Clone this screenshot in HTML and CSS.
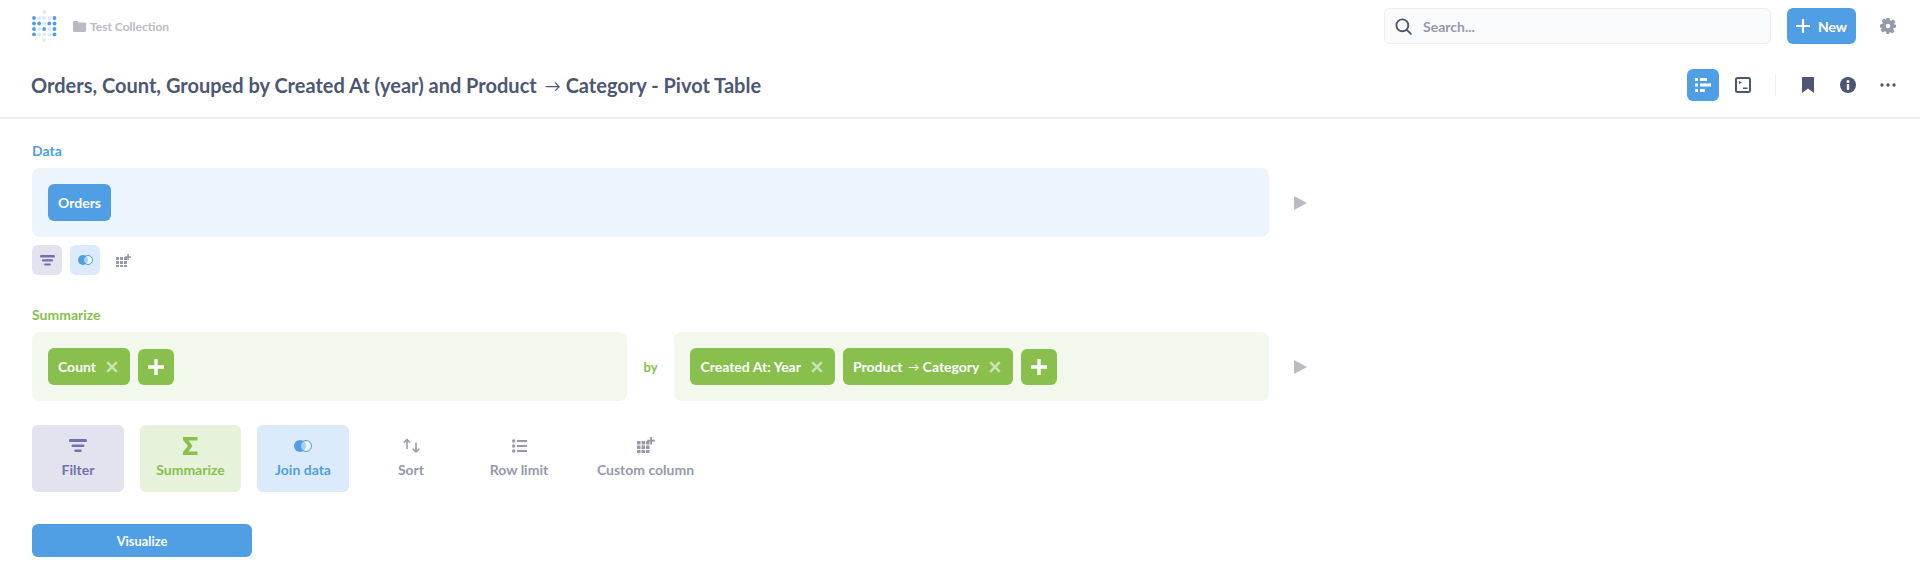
FILE: index.html
```html
<!DOCTYPE html>
<html lang="en">
<head>
<meta charset="utf-8">
<title>Orders, Count - Pivot Table</title>
<link rel="stylesheet" href="styles.css">
</head>
<body>
<header class="header">
  <div class="topbar">
    <div class="brand">
      <svg class="logo" viewBox="0 0 26 32" width="26" height="32">
        <g fill="#509ee3">
          <circle cx="2" cy="8" r="1.9"/><circle cx="22.5" cy="8" r="1.9"/>
          <circle cx="2" cy="13.5" r="1.9"/><circle cx="7.2" cy="13.5" r="1.9"/><circle cx="17.3" cy="13.5" r="1.9"/><circle cx="22.5" cy="13.5" r="1.9"/>
          <circle cx="2" cy="19" r="1.9"/><circle cx="12.2" cy="19" r="1.9"/><circle cx="22.5" cy="19" r="1.9"/>
          <circle cx="2" cy="24.4" r="1.9"/><circle cx="22.5" cy="24.4" r="1.9"/>
        </g>
        <g fill="#dcebf9">
          <circle cx="12.2" cy="2" r="1.9"/>
          <circle cx="7.2" cy="8" r="1.9"/><circle cx="12.2" cy="8" r="1.9"/><circle cx="17.3" cy="8" r="1.9"/>
          <circle cx="12.2" cy="13.5" r="1.9"/>
          <circle cx="7.2" cy="19" r="1.9"/><circle cx="17.3" cy="19" r="1.9"/>
          <circle cx="7.2" cy="24.4" r="1.9"/><circle cx="12.2" cy="24.4" r="1.9"/><circle cx="17.3" cy="24.4" r="1.9"/>
          <circle cx="12.2" cy="30" r="1.9"/>
        </g>
      </svg>
      <a class="crumb">
        <svg viewBox="0 0 13 11" width="13" height="11"><path fill="#b8bbc3" d="M0 1.2C0 .5.5 0 1.2 0h3.2l1.4 1.6h6C12.500 1.600 13 2.100 13 2.800v7C13 10.500 12.500 11 11.800 11H1.200C.5 11 0 10.500 0 9.800z"/></svg>
        <span>Test Collection</span>
      </a>
    </div>
    <div class="top-actions">
      <div class="search">
        <svg viewBox="0 0 18 18" width="17" height="17"><circle cx="7.800" cy="7.800" r="6.300" fill="none" stroke="#4c5773" stroke-width="2"/><path d="M12.500 12.500L16.800 16.800" stroke="#4c5773" stroke-width="2" stroke-linecap="round"/></svg>
        <span>Search...</span>
      </div>
      <button class="new-btn">
        <svg viewBox="0 0 14 14" width="14" height="14"><path d="M7 0v14M0 7h14" stroke="#fff" stroke-width="2.200"/></svg>
        <span>New</span>
      </button>
      <svg class="gear" viewBox="0 0 32 32" width="16" height="16"><path fill="#949aab" fill-rule="evenodd" d="M13 0h6l1 4.600 2.600 1.100 4-2.500 4.200 4.200-2.500 4 1.100 2.600L32 13v6l-4.600 1-1.100 2.600 2.500 4-4.200 4.200-4-2.500-2.600 1.100L19 32h-6l-1-4.600-2.600-1.100-4 2.500-4.200-4.200 2.500-4L4.600 20 0 19v-6l4.600-1 1.100-2.600-2.500-4 4.200-4.200 4 2.500L12 4.600zM16 11.500a4.500 4.500 0 1 0 0 9 4.500 4.500 0 0 0 0-9z"/></svg>
    </div>
  </div>
  <div class="titlebar">
    <h1>Orders, Count, Grouped by Created At (year) and Product <span class="arrow">→</span> Category - Pivot Table</h1>
    <div class="title-actions">
      <button class="icon-btn active">
        <svg viewBox="0 0 16 14" width="16" height="14"><path fill="#fff" d="M0 0h3v3H0zM5 0h7v3H5zM0 5.500h3v3H0zM5 5.500h11v3H5zM0 11h3v3H0zM5 11h5v3H5z"/></svg>
      </button>
      <button class="icon-btn">
        <svg viewBox="0 0 16 16" width="16" height="16"><rect x="1" y="1" width="14" height="14" rx="1.500" fill="none" stroke="#4c5773" stroke-width="2"/><path fill="#4c5773" d="M4 4l3 1.500L4 7zM8 10.500h4.500V12H8z"/></svg>
      </button>
      <span class="divider"></span>
      <svg class="t-icon bookmark" viewBox="0 0 12 16" width="12" height="16"><path fill="#4c5773" d="M0 0h12v16L6 11.500 0 16z"/></svg>
      <svg class="t-icon info" viewBox="0 0 16 16" width="16" height="16"><circle cx="8" cy="8" r="8" fill="#4c5773"/><rect x="6.800" y="7" width="2.400" height="5.800" fill="#fff"/><circle cx="8" cy="4.600" r="1.500" fill="#fff"/></svg>
      <svg class="t-icon more" viewBox="0 0 16 4" width="16" height="4"><g fill="#4c5773"><circle cx="2" cy="2" r="1.700"/><circle cx="8" cy="2" r="1.700"/><circle cx="14" cy="2" r="1.700"/></g></svg>
    </div>
  </div>
</header>

<main class="notebook">
  <section class="step data-step">
    <div class="step-label blue">Data</div>
    <div class="step-row">
      <div class="panel blue-panel grow">
        <span class="chip blue-chip">Orders</span>
      </div>
      <svg class="play" viewBox="0 0 13 14" width="13" height="14"><path fill="#b8bbc3" d="M0 0l13 7-13 7z"/></svg>
    </div>
    <div class="mini-actions">
      <button class="mini purple-bg">
        <svg viewBox="0 0 15 11" width="15" height="11"><path fill="#7172ad" d="M1 0h13a1 1 0 0 1 0 2.400H1A1 1 0 0 1 1 0zM3 4.300h9a1 1 0 0 1 0 2.200H3a1 1 0 0 1 0-2.200zM5.200 8.400h4.600a1 1 0 0 1 0 2.200H5.200a1 1 0 0 1 0-2.200z"/></svg>
      </button>
      <button class="mini blue-bg">
        <svg viewBox="0 0 15 10" width="15" height="10"><circle cx="5" cy="5" r="5" fill="#509ee3"/><circle cx="10" cy="5" r="4.500" fill="#fff" fill-opacity=".5" stroke="#509ee3"/></svg>
      </button>
      <button class="mini plain">
        <svg viewBox="0 0 15 13" width="15" height="13"><g fill="#949aab"><path d="M0 3h3v3H0zM4 3h3v3H4zM8 3h3v3H8zM0 7h3v3H0zM4 7h3v3H4zM8 7h3v3H8zM0 11h3v2H0zM4 11h3v2H4zM8 11h3v2H8z"/><path d="M11.300 0h1.500v2.200H15v1.500h-2.200v2.200h-1.500V3.700H9V2.200h2.300z"/></g></svg>
      </button>
    </div>
  </section>

  <section class="step summarize-step">
    <div class="step-label green">Summarize</div>
    <div class="step-row">
      <div class="panel green-panel half">
        <span class="chip green-chip"><span>Count</span><svg class="x" viewBox="0 0 12 12" width="12" height="12"><path d="M1.200 1.200l9.600 9.600M10.800 1.200l-9.600 9.600" stroke="#fff" stroke-opacity=".55" stroke-width="2.600"/></svg></span>
        <button class="plus-chip"><svg viewBox="0 0 16 16" width="16" height="16"><path d="M8 0v16M0 8h16" stroke="#fff" stroke-width="3.400"/></svg></button>
      </div>
      <span class="by">by</span>
      <div class="panel green-panel breakout">
        <span class="chip green-chip"><span>Created At: Year</span><svg class="x" viewBox="0 0 12 12" width="12" height="12"><path d="M1.200 1.200l9.600 9.600M10.800 1.200l-9.600 9.600" stroke="#fff" stroke-opacity=".55" stroke-width="2.600"/></svg></span>
        <span class="chip green-chip"><span>Product <span class="arrow">→</span> Category</span><svg class="x" viewBox="0 0 12 12" width="12" height="12"><path d="M1.200 1.200l9.600 9.600M10.800 1.200l-9.600 9.600" stroke="#fff" stroke-opacity=".55" stroke-width="2.600"/></svg></span>
        <button class="plus-chip"><svg viewBox="0 0 16 16" width="16" height="16"><path d="M8 0v16M0 8h16" stroke="#fff" stroke-width="3.400"/></svg></button>
      </div>
      <svg class="play" viewBox="0 0 13 14" width="13" height="14"><path fill="#b8bbc3" d="M0 0l13 7-13 7z"/></svg>
    </div>
  </section>

  <div class="actions">
    <button class="action purple">
      <svg viewBox="0 0 18 18" width="18" height="18"><path fill="#7172ad" d="M1.200 2h15.600a1.400 1.400 0 0 1 0 3H1.200a1.400 1.400 0 0 1 0-3zM3.800 7.500h10.400a1.300 1.300 0 0 1 0 2.600H3.800a1.300 1.300 0 0 1 0-2.600zM6.500 12.500h5a1.200 1.200 0 0 1 0 2.400h-5a1.200 1.200 0 0 1 0-2.400z"/></svg>
      <span>Filter</span>
    </button>
    <button class="action lime">
      <svg viewBox="0 0 15 18" width="15" height="18"><path fill="#88bf4d" d="M0 0h14.500v3.400H5.500l4 5.600-4 5.600h9V18H0v-3l5-6-5-6z"/></svg>
      <span>Summarize</span>
    </button>
    <button class="action sky">
      <svg viewBox="0 0 18 18" width="18" height="18"><circle cx="6" cy="9" r="6" fill="#509ee3"/><circle cx="12" cy="9" r="5.500" fill="#fff" fill-opacity=".5" stroke="#509ee3"/></svg>
      <span>Join data</span>
    </button>
    <button class="action grey">
      <svg viewBox="0 0 17 18" width="17" height="18"><path d="M4 12V2.500M.7 5.800L4 2.500l3.300 3.300M13 5.500V15M9.700 11.700L13 15l3.300-3.300" fill="none" stroke="#949aab" stroke-width="1.500"/></svg>
      <span>Sort</span>
    </button>
    <button class="action grey">
      <svg viewBox="0 0 15 18" width="15" height="18"><g fill="#949aab"><circle cx="1.700" cy="4" r="1.700"/><circle cx="1.700" cy="9" r="1.700"/><circle cx="1.700" cy="14" r="1.700"/><path d="M5 3h10v2H5zM5 8h10v2H5zM5 13h10v2H5z"/></g></svg>
      <span>Row limit</span>
    </button>
    <button class="action grey">
      <svg viewBox="0 0 18 16" width="18" height="16"><g fill="#949aab"><path d="M0 4h3.500v3.500H0zM4.500 4H8v3.500H4.500zM9 4h3.500v3.500H9zM0 8.500h3.500V12H0zM4.500 8.500H8V12H4.500zM9 8.500h3.500V12H9zM0 13h3.500v3H0zM4.500 13H8v3H4.500zM9 13h3.500v3H9z"/><path d="M13.200 0h1.800v2.800H18v1.800h-3v2.800h-1.800V4.600h-2.900V2.800h2.900z"/></g></svg>
      <span>Custom column</span>
    </button>
  </div>

  <button class="visualize">Visualize</button>
</main>
</body>
</html>
```

FILE: styles.css
```css
* { box-sizing: border-box; }
html, body { margin: 0; padding: 0; background: #fff; }
body {
  font-family: Lato, "Noto Sans", sans-serif;
  font-weight: 700;
  color: #4c5773;
  height: 566px;
  overflow: hidden;
}
button { font: inherit; border: 0; padding: 0; background: none; }
svg { display: block; flex: none; }
.arrow { font-size: .8em; font-weight: 400; margin-left: .2em; vertical-align: .08em; }

.header { height: 119px; border-bottom: 2px solid #f0f0f0; }
.topbar {
  height: 52px;
  display: flex;
  justify-content: space-between;
  padding: 8px 24px 0 32px;
}
.brand { display: flex; align-items: flex-start; }
.logo { margin-top: 2px; }
.crumb {
  display: flex;
  align-items: center;
  gap: 4px;
  margin: 7px 0 0 15px;
  font-size: 12px;
  height: 22px;
  color: #b8bbc3;
}
.top-actions { display: flex; align-items: flex-start; }
.search {
  width: 387px;
  height: 36px;
  display: flex;
  align-items: center;
  gap: 11px;
  padding-left: 10px;
  background: #f9fbfc;
  border: 1px solid #eeecec;
  border-radius: 6px;
  font-size: 14px;
  color: #949aab;
}
.new-btn {
  width: 69px;
  height: 36px;
  margin-left: 16px;
  display: flex;
  align-items: center;
  justify-content: center;
  gap: 8px;
  background: #509ee3;
  border-radius: 6px;
  color: #fff;
  font-size: 14px;
}
.gear { margin: 10px 0 0 24px; }

.titlebar {
  height: 65px;
  display: flex;
  justify-content: space-between;
  padding: 17px 24px 0 31px;
}
h1 { margin: 0; font-size: 20px; font-weight: 700; line-height: 32px; color: #4c5773; }
.title-actions { display: flex; align-items: center; height: 32px; }
.icon-btn {
  width: 32px;
  height: 32px;
  margin-right: 8px;
  display: flex;
  align-items: center;
  justify-content: center;
  border-radius: 6px;
}
.icon-btn.active { background: #509ee3; }
.divider { width: 1px; height: 22px; background: #f0f0f0; margin: 0 26px 0 8px; }
.t-icon.info { margin: 0 24px 0 26px; }

.notebook { padding-left: 32px; }
.step-label { font-size: 14px; line-height: 16px; }
.blue { color: #509ee3; }
.green { color: #88bf4d; }
.step-row { display: flex; align-items: center; margin-top: 9px; width: 1275px; }
.panel {
  height: 69px;
  display: flex;
  align-items: center;
  gap: 8px;
  padding: 0 16px;
  border-radius: 8px;
}
.grow { width: 1238px; }
.half { width: 595px; }
.breakout { width: 595px; }
.blue-panel { background: #ecf4fc; }
.green-panel { background: #f3f8ed; }
.play { margin-left: 25px; }
.by { width: 48px; text-align: center; font-size: 13px; color: #88bf4d; }

.data-step { padding-top: 24px; }
.summarize-step { margin-top: 32px; }
.chip {
  height: 37px;
  display: inline-flex;
  align-items: center;
  gap: 10px;
  padding: 0 10px;
  border-radius: 6px;
  color: #fff;
  font-size: 14px;
}
.blue-chip { background: #509ee3; }
.green-chip { background: #88bf4d; padding-right: 12px; }
.plus-chip {
  width: 36px;
  height: 36px;
  display: flex;
  align-items: center;
  justify-content: center;
  background: #88bf4d;
  border-radius: 6px;
}

.mini-actions { display: flex; gap: 8px; margin-top: 8px; }
.mini {
  width: 30px;
  height: 30px;
  display: flex;
  align-items: center;
  justify-content: center;
  border-radius: 6px;
}
.purple-bg { background: #e3e3ef; }
.blue-bg { background: #dcebfb; }

.actions { display: flex; gap: 16px; margin-top: 24px; }
.action {
  min-width: 92px;
  height: 67px;
  padding: 0 16px;
  display: flex;
  flex-direction: column;
  align-items: center;
  justify-content: flex-start;
  border-radius: 6px;
  font-size: 14px;
  position: relative;
}
.action svg { margin-top: 12px; }
.action span { position: absolute; left: 0; right: 0; top: 37px; line-height: 16px; text-align: center; }
.action.purple { background: #e3e3ef; color: #7172ad; }
.action.lime { background: #e7f2da; color: #88bf4d; width: 101px; }
.action.sky { background: #dcebfb; color: #509ee3; }
.action.grey { color: #949aab; }
.action.grey:last-child { width: 129px; }

.visualize {
  display: block;
  width: 220px;
  height: 33px;
  margin-top: 32px;
  background: #509ee3;
  border-radius: 6px;
  color: #fff;
  font-size: 12.8px;
}
```
